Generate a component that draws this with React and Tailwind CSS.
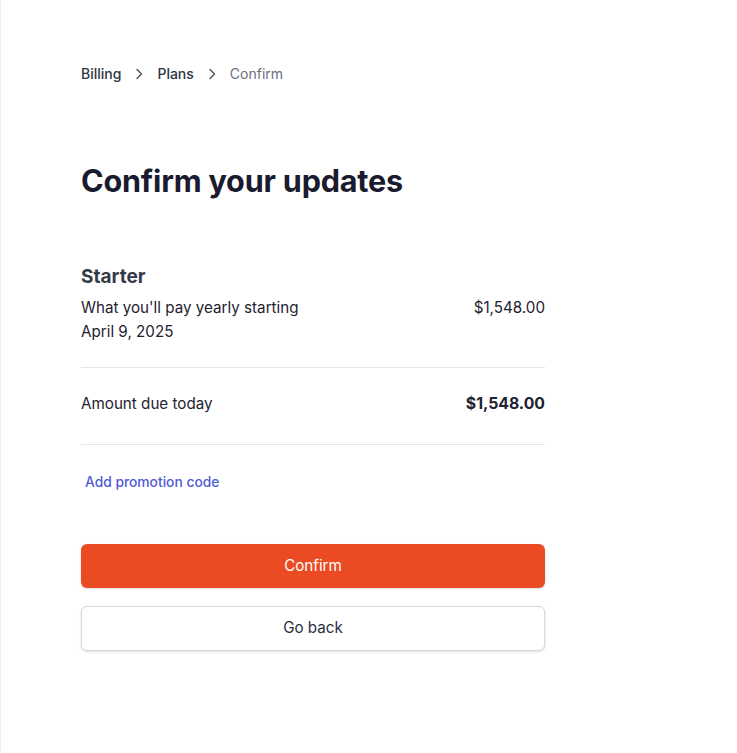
import React from 'react';

const Chevron = () => (
  <svg width="16" height="16" viewBox="0 0 16 16" fill="none" className="text-[#4b5262]">
    <path d="M6 3.5L10.5 8L6 12.5" stroke="currentColor" strokeWidth="1.4" strokeLinecap="round" strokeLinejoin="round" />
  </svg>
);

const App = () => {
  return (
    <div className="min-h-screen bg-white border-l border-[#ececec] font-['Inter',sans-serif]">
      <div className="w-[464px] ml-[80px] pt-16 pb-24">
        <nav className="flex items-center gap-2.5 text-sm leading-5 font-medium">
          <span className="text-[#2f3444]">Billing</span>
          <Chevron />
          <span className="text-[#2f3444]">Plans</span>
          <Chevron />
          <span className="text-[#6b7080] font-normal">Confirm</span>
        </nav>

        <h1 className="mt-[79px] text-[30.6px] leading-9 font-bold text-[#1a1b2e] tracking-[-0.2px]">
          Confirm your updates
        </h1>

        <div className="mt-16">
          <h2 className="text-[19px] leading-7 font-bold text-[#353a4a]">Starter</h2>
          <div className="mt-[5px] pb-[23px] border-b border-[#e3e5ea] flex justify-between text-[15.2px] leading-6 text-[#1f2230]">
            <div>
              <div>What you'll pay yearly starting</div>
              <div>April 9, 2025</div>
            </div>
            <div>$1,548.00</div>
          </div>
          <div className="pt-6 pb-7 border-b border-[#e3e5ea] flex justify-between text-[15.2px] leading-6 text-[#1f2230]">
            <div>Amount due today</div>
            <div className="font-bold text-[15.8px]">$1,548.00</div>
          </div>
        </div>

        <div className="mt-6 pl-1">
          <button className="text-[13.8px] leading-5 font-medium text-[#4f5bd5]">Add promotion code</button>
        </div>

        <div className="mt-[51px] flex flex-col gap-[18px]">
          <button className="h-11 w-full rounded-md bg-[#ea4b22] text-white text-[15.2px] font-normal shadow-sm">
            Confirm
          </button>
          <button className="h-[45px] w-full rounded-md bg-white border border-[#d6d8dd] text-[#2a2f3d] text-[15.2px] font-normal shadow-sm">
            Go back
          </button>
        </div>
      </div>
    </div>
  );
};

export default App;
